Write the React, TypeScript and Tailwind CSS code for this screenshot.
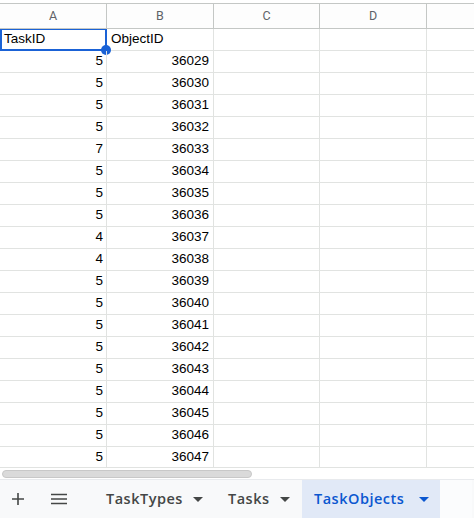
import React from 'react';

const taskIds = [5, 5, 5, 5, 7, 5, 5, 5, 4, 4, 5, 5, 5, 5, 5, 5, 5, 5, 5];
const firstObjectId = 36029;

// widths include the right border line
const colWidths = ['w-[107px]', 'w-[107px]', 'w-[106px]', 'w-[107px]'];
const letters = ['A', 'B', 'C', 'D'];

const Caret: React.FC<{ className?: string }> = ({ className }) => (
  <svg width="10" height="5" viewBox="0 0 10 5" className={className}>
    <path d="M0 0 L10 0 L5 5 Z" fill="currentColor" />
  </svg>
);

const Row: React.FC<{ a: string; b: string; right?: boolean; selected?: boolean }> = ({ a, b, right, selected }) => (
  <div className="flex h-[22px] shrink-0 border-b border-[#e1e3e1]">
    <div
      className={`relative flex ${colWidths[0]} shrink-0 items-center border-r border-[#e1e3e1] ${right ? 'justify-end pr-[3px]' : 'pl-[4px]'}`}
    >
      {a}
      {selected && (
        <>
          <div className="pointer-events-none absolute -top-px -bottom-px left-0 -right-px border-2 border-[#1a62d6]" />
          <div className="absolute -right-[5px] -bottom-[5px] h-[10px] w-[10px] rounded-full bg-[#1a62d6]" />
        </>
      )}
    </div>
    <div className={`flex ${colWidths[1]} shrink-0 items-center border-r border-[#e1e3e1] ${right ? 'justify-end pr-[4px]' : 'pl-[4px]'}`}>
      {b}
    </div>
    <div className={`${colWidths[2]} shrink-0 border-r border-[#e1e3e1]`} />
    <div className={`${colWidths[3]} shrink-0 border-r border-[#e1e3e1]`} />
    <div className="flex-1" />
  </div>
);

const App: React.FC = () => {
  return (
    <div
      className="flex h-[518px] w-[474px] flex-col overflow-hidden bg-white text-[13.5px] text-black"
      style={{ fontFamily: '"Liberation Sans", Arial, sans-serif' }}
    >
      <div className="h-[3px] shrink-0" />

      {/* column headers */}
      <div
        className="flex h-[26px] shrink-0 border-y border-[#c4c7c5] bg-[#fdfdfd] text-[12.5px] text-[#5f6368]"
        style={{ fontFamily: 'Roboto, "Liberation Sans", sans-serif' }}
      >
        {letters.map((l, i) => (
          <div key={l} className={`flex ${colWidths[i]} shrink-0 items-center justify-center border-r border-[#c4c7c5]`}>
            {l}
          </div>
        ))}
        <div className="flex-1" />
      </div>

      {/* cells */}
      <div className="relative flex min-h-0 flex-1 flex-col overflow-hidden">
        <Row a="TaskID" b="ObjectID" selected />
        {taskIds.map((t, i) => (
          <Row key={i} a={String(t)} b={String(firstObjectId + i)} right />
        ))}
      </div>

      {/* horizontal scrollbar */}
      <div className="flex h-[12px] shrink-0 items-center border-t border-[#e1e3e1] bg-white px-[2px]">
        <div className="h-[8px] w-[250px] rounded-full border border-[#c8c8c8] bg-[#dadada]" />
      </div>

      {/* sheet tabs */}
      <div
        className="flex h-[39px] shrink-0 items-stretch border-t border-[#e8eaed] bg-[#f8f9fa] text-[14.5px] font-semibold tracking-[0.5px] text-[#444746]"
        style={{ fontFamily: '"Open Sans", Roboto, sans-serif' }}
      >
        <div className="flex w-[36px] items-center justify-center">
          <svg width="12" height="12" viewBox="0 0 12 12">
            <path d="M6 0 V12 M0 6 H12" stroke="#444746" strokeWidth="1.6" />
          </svg>
        </div>
        <div className="flex w-[46px] items-center justify-center">
          <svg width="16" height="12" viewBox="0 0 16 12">
            <path d="M0 1.5 H16 M0 6 H16 M0 10.5 H16" stroke="#444746" strokeWidth="1.6" />
          </svg>
        </div>
        <div className="w-[10px]" />
        <div className="flex w-[122px] items-center justify-between pl-[14px] pr-[11px]">
          <span>TaskTypes</span>
          <Caret />
        </div>
        <div className="flex w-[88px] items-center justify-between pl-[14px] pr-[12px]">
          <span>Tasks</span>
          <Caret />
        </div>
        <div className="flex w-[138px] items-center justify-between bg-[#e1e9f7] pl-[12px] pr-[11px] text-[#0b57d0]">
          <span>TaskObjects</span>
          <Caret />
        </div>
        <div className="w-[32px] bg-[#fbfcfd]" />
        <div className="flex-1" />
      </div>
    </div>
  );
};

export default App;
